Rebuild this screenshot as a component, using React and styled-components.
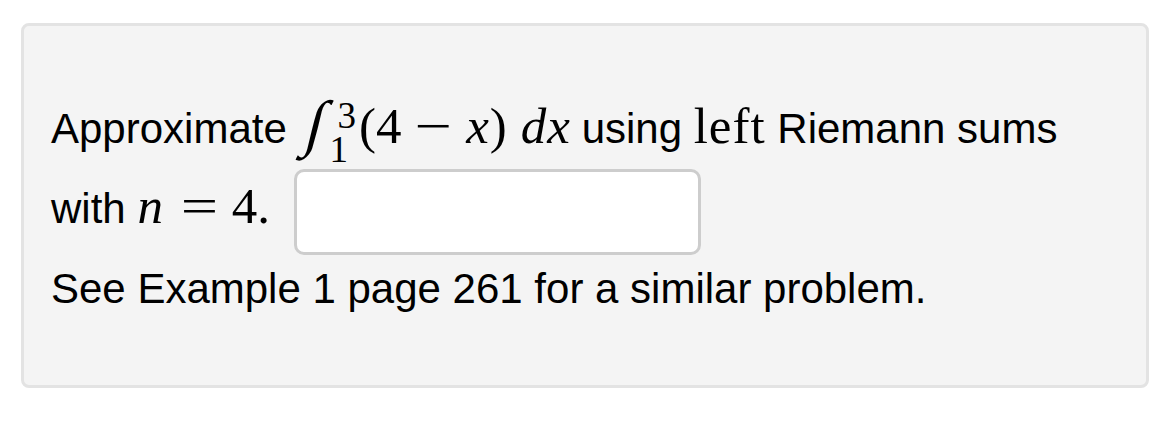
import styled, { createGlobalStyle } from "styled-components";

const GlobalStyle = createGlobalStyle`
  body {
    margin: 0;
    background: #ffffff;
  }
`;

const Page = styled.div`
  padding: 23px 21px 37px 21px;
`;

const Panel = styled.div`
  box-sizing: border-box;
  width: 1128px;
  height: 365px;
  padding: 63px 27px 0 27px;
  background: #f4f4f4;
  border: 3px solid #e3e3e3;
  border-radius: 8px;
  font-family: "Liberation Sans", Arial, sans-serif;
  font-size: 42px;
  line-height: 80px;
  color: #000;
`;

const Para = styled.p`
  margin: 0;
  line-height: ${(p) => p.$lh || 80}px;
`;

const Math = styled.span`
  font-family: "Liberation Serif", "Times New Roman", serif;
  font-size: 51px;
  line-height: 1;
  letter-spacing: ${(p) => p.$track || 0}px;
  white-space: nowrap;
`;

const Var = styled.i`
  font-style: italic;
  margin-left: ${(p) => p.$lead || 0}px;
  margin-right: ${(p) => p.$gap || 0}px;
`;

const Op = styled.span`
  display: inline-block;
  margin: 0 ${(p) => p.$space}px;
  transform: scaleX(${(p) => p.$stretch || 1});
`;

const Integral = styled.span`
  display: inline-block;
  margin-left: 10px;
  font-size: 62px;
  line-height: 0;
  transform: skewX(-14deg);
  vertical-align: -1px;
`;

const Limits = styled.span`
  display: inline-flex;
  flex-direction: column;
  font-size: 37px;
  line-height: 34px;
  vertical-align: 15px;
  margin: 0 3px 0 4px;
`;

const Limit = styled.span`
  padding-left: ${(p) => p.$shift}px;
`;

const AnswerBox = styled.input`
  box-sizing: border-box;
  width: 407px;
  height: 86px;
  margin: -8px 0 -8px 24px;
  vertical-align: middle;
  background: #ffffff;
  border: 3px solid #cdcdcd;
  border-radius: 10px;
  font-size: 32px;
  outline: none;
`;

export default function App() {
  return (
    <>
      <GlobalStyle />
      <Page>
        <Panel>
          <Para>
            Approximate{" "}
            <Math>
              <Integral>∫</Integral>
              <Limits>
                <Limit $shift={8}>3</Limit>
                <Limit $shift={0}>1</Limit>
              </Limits>
              (4<Op $space={18} $stretch={1.3}>−</Op>
              <Var $gap={1}>x</Var>)<Var $lead={14}>d</Var>
              <Var $lead={1}>x</Var>
            </Math>{" "}
            using <Math $track={1}>left</Math> Riemann sums with{" "}
            <Math>
              <Var $gap={4}>n</Var>
              <Op $space={18} $stretch={1.3}>=</Op>4.
            </Math>
            <AnswerBox type="text" />
          </Para>
          <Para $lh={79}>See Example 1 page 261 for a similar problem.</Para>
        </Panel>
      </Page>
    </>
  );
}
